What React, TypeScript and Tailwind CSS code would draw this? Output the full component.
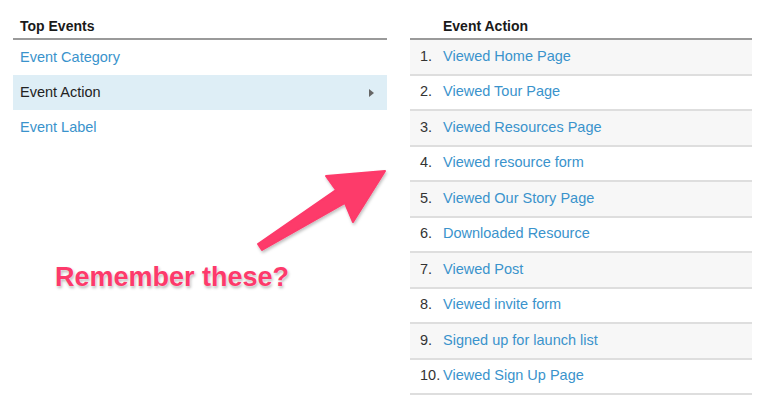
import React from 'react';

const actions = [
  'Viewed Home Page',
  'Viewed Tour Page',
  'Viewed Resources Page',
  'Viewed resource form',
  'Viewed Our Story Page',
  'Downloaded Resource',
  'Viewed Post',
  'Viewed invite form',
  'Signed up for launch list',
  'Viewed Sign Up Page',
];

const dims = ['Event Category', 'Event Action', 'Event Label'];

export default function App() {
  return (
    <div
      className="relative w-[768px] h-[409px] bg-white overflow-hidden"
      style={{ fontFamily: '"Liberation Sans", Arial, sans-serif' }}
    >
      <div className="flex pt-[15px] pl-[13px] gap-[23px]">
        {/* left: dimension picker */}
        <div className="w-[374px]">
          <div className="h-[25px] border-b-2 border-[#9a9a9a] pl-[7px] text-[14px] font-bold text-[#1a1a1a] leading-[22px]">
            Top Events
          </div>
          {dims.map((d) => {
            const active = d === 'Event Action';
            return (
              <div
                key={d}
                className={`h-[35px] flex items-center justify-between pl-[7px] pr-[13px] text-[14.5px] ${
                  active ? 'bg-[#deeef6] text-[#222]' : 'text-[#3a93cc]'
                }`}
              >
                <span>{d}</span>
                {active && (
                  <span className="w-0 h-0 border-y-[4px] border-y-transparent border-l-[5px] border-l-[#666]" />
                )}
              </div>
            );
          })}
        </div>

        {/* right: event action table */}
        <div className="w-[342px]">
          <div className="h-[25px] border-b-2 border-[#9a9a9a] pl-[33px] text-[14px] font-bold text-[#1a1a1a] leading-[22px]">
            Event Action
          </div>
          {actions.map((a, i) => (
            <div
              key={a}
              className={`h-[35.5px] border-b-2 border-[#dedede] flex items-center text-[14.5px] ${
                i % 2 === 0 ? 'bg-[#f7f7f7]' : 'bg-white'
              }`}
            >
              <span className="w-[33px] pl-[10px] text-[#333]">{i + 1}.</span>
              <span className="text-[#3a93cc]">{a}</span>
            </div>
          ))}
        </div>
      </div>

      {/* annotation */}
      <svg className="absolute left-0 top-0" width="768" height="409">
        <defs>
          <filter id="sh" x="-20%" y="-20%" width="140%" height="140%">
            <feDropShadow dx="1" dy="2" stdDeviation="1.5" floodColor="#000" floodOpacity="0.25" />
          </filter>
        </defs>
        <polygon
          points="258,244 336,190 326,176 385,171 353,222 345,203 262,250"
          fill="#fd3a6b"
          stroke="#fd3a6b"
          strokeWidth="2"
          strokeLinejoin="round"
          filter="url(#sh)"
        />
      </svg>
      <div
        className="absolute left-[55px] top-[261px] text-[27px] font-bold leading-[32px] text-[#fd3a6b]"
        style={{ textShadow: '0 0 2px #fff, 1px 2px 3px rgba(0,0,0,0.3)' }}
      >
        Remember these?
      </div>
    </div>
  );
}
